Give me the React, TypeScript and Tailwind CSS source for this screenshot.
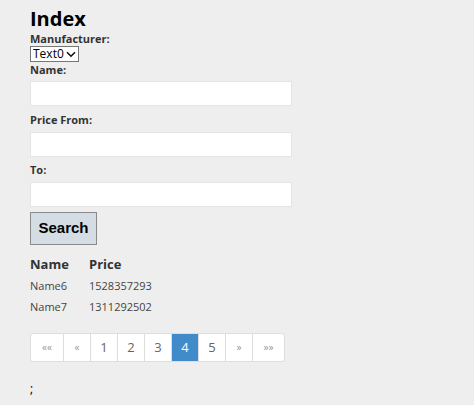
import React from 'react'

const rows = [
  { name: 'Name6', price: '1528357293' },
  { name: 'Name7', price: '1311292502' },
]

const pages = ['««', '«', '1', '2', '3', '4', '5', '»', '»»']

export default function App() {
  return (
    <div className="min-h-[405px] bg-[#eeeeee] px-[30px] pt-[7px] font-['Open_Sans',sans-serif] text-[#333]">
      <h1 className="text-[20px] font-bold leading-[24px] text-black">Index</h1>
      <form className="flex flex-col items-start">
        <label className="text-[11px] font-bold leading-[15px]">Manufacturer:</label>
        <div className="relative h-[16px] w-[49px]">
          <select className="block h-[16px] w-[49px] appearance-none border border-[#777] bg-white py-0 pl-[2px] pr-[14px] text-[12px] leading-[14px] text-black">
            <option>Text0</option>
          </select>
          <svg
            className="pointer-events-none absolute right-[3px] top-[5px]"
            width="10"
            height="7"
            viewBox="0 0 10 7"
            fill="none"
            stroke="#111"
            strokeWidth="1.6"
          >
            <path d="M1 1.2 L5 5.2 L9 1.2" />
          </svg>
        </div>
        <label className="text-[11px] font-bold leading-[15px]">Name:</label>
        <input className="mt-[4px] h-[25px] w-[262px] border border-[#e4e4e4] bg-white" />
        <label className="mt-[6px] text-[11px] font-bold leading-[15px]">Price From:</label>
        <input className="mt-[5px] h-[25px] w-[262px] border border-[#e4e4e4] bg-white" />
        <label className="mt-[5px] text-[11px] font-bold leading-[15px]">To:</label>
        <input className="mt-[5px] h-[25px] w-[262px] border border-[#e4e4e4] bg-white" />
        <button
          type="button"
          className="mt-[5px] h-[33px] w-[67px] border border-[#8a8a8a] bg-[#d4dde3] font-['Liberation_Sans',sans-serif] text-[15px] font-bold text-black"
        >
          Search
        </button>
      </form>
      <table className="mt-[9px]">
        <thead>
          <tr>
            <th className="w-[59px] text-left text-[13px] font-bold leading-[21px]">Name</th>
            <th className="text-left text-[13px] font-bold leading-[21px]">Price</th>
          </tr>
        </thead>
        <tbody>
          {rows.map((r) => (
            <tr key={r.name}>
              <td className="text-[11px] leading-[21px] text-[#444]">{r.name}</td>
              <td className="text-[11px] leading-[21px] text-[#444]">{r.price}</td>
            </tr>
          ))}
        </tbody>
      </table>
      <ul className="mt-[16px] flex w-fit overflow-hidden rounded-[3px] border border-[#ddd] bg-white">
        {pages.map((p, i) => (
          <li
            key={i}
            className={`flex h-[27px] items-center justify-center border-l border-[#ddd] first:border-l-0 ${
              p === '4' ? 'bg-[#428bca] text-white' : /\d/.test(p) ? 'text-[#666]' : 'text-[#999]'
            } ${p.length === 2 ? 'w-[32px] text-[10px]' : p === '«' || p === '»' ? 'w-[27px] text-[10px]' : 'w-[27px] text-[13px]'}`}
          >
            {p}
          </li>
        ))}
      </ul>
      <p className="mt-[19px] text-[12px] leading-[16px] text-black">;</p>
    </div>
  )
}
